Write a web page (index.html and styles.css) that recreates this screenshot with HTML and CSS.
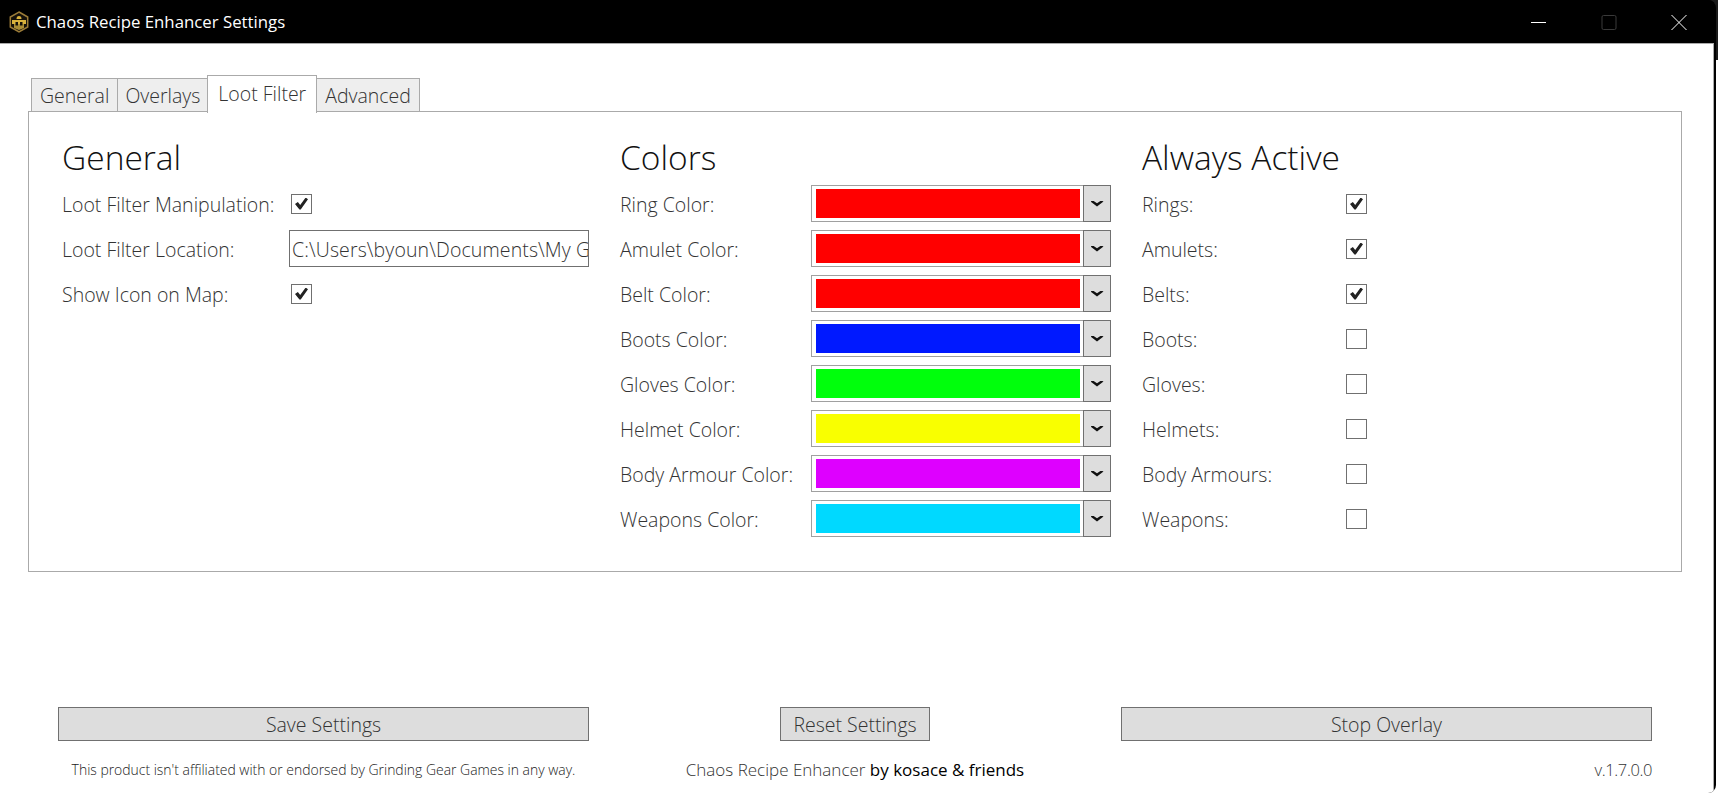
FILE: index.html
```html
<!DOCTYPE html>
<html lang="en">
<head>
    <meta charset="UTF-8">
    <meta name="viewport" content="width=device-width, initial-scale=1.0">
    <title>Chaos Recipe Enhancer Settings</title>
    <link rel="stylesheet" href="styles.css">
</head>
<body>
    <div class="window">
        <header class="titlebar">
            <svg class="logo" viewBox="0 0 20 22" width="20" height="22">
                <path d="M10 1 L18.7 6 V16 L10 21 L1.3 16 V6 Z" fill="#14100a" stroke="#9c7c38" stroke-width="1.5"/>
                <path d="M7.5 8 Q7.5 5 10 5 Q12.5 5 12.5 8 Z" fill="#d8b13c"/>
                <path d="M3 9 H17 V13 H3 Z" fill="#d8b13c"/>
                <path d="M5 13 H15 V17 L10 19 L5 17 Z" fill="#a98c34"/>
                <path d="M6.5 11 H9 V14.5 H6.5 Z M11 11 H13.5 V14.5 H11 Z" fill="#14100a"/>
            </svg>
            <span class="window-title">Chaos Recipe Enhancer Settings</span>
            <div class="window-buttons">
                <span class="win-btn"><svg width="16" height="16" viewBox="0 0 16 16"><path d="M0 7.5 H15" stroke="#fff" stroke-width="1"/></svg></span>
                <span class="win-btn"><svg width="16" height="16" viewBox="0 0 16 16"><rect x="1" y="0.5" width="14" height="14" rx="1.5" fill="none" stroke="#3a3a3a" stroke-width="1"/></svg></span>
                <span class="win-btn"><svg width="16" height="16" viewBox="0 0 16 16"><path d="M0.5 0 L15.5 15 M15.5 0 L0.5 15" stroke="#fff" stroke-width="1"/></svg></span>
            </div>
        </header>

        <main class="content">
            <nav class="tabs">
                <a class="tab">General</a>
                <a class="tab tab-overlays">Overlays</a>
                <a class="tab tab-active">Loot Filter</a>
                <a class="tab">Advanced</a>
            </nav>
            <section class="panel">
                <div class="column column-general">
                    <h2 class="heading">General</h2>
                    <div class="row">
                        <label class="label label-general">Loot Filter Manipulation:</label>
                        <span class="checkbox checked"></span>
                    </div>
                    <div class="row">
                        <label class="label label-general">Loot Filter Location:</label>
                        <div class="textbox">C:\Users\byoun\Documents\My G</div>
                    </div>
                    <div class="row">
                        <label class="label label-general">Show Icon on Map:</label>
                        <span class="checkbox checked"></span>
                    </div>
                </div>

                <div class="column column-colors">
                    <h2 class="heading">Colors</h2>
                    <div class="row"><label class="label label-colors">Ring Color:</label><div class="combo"><div class="swatch red"></div><div class="combo-btn"></div></div></div>
                    <div class="row"><label class="label label-colors">Amulet Color:</label><div class="combo"><div class="swatch red"></div><div class="combo-btn"></div></div></div>
                    <div class="row"><label class="label label-colors">Belt Color:</label><div class="combo"><div class="swatch red"></div><div class="combo-btn"></div></div></div>
                    <div class="row"><label class="label label-colors">Boots Color:</label><div class="combo"><div class="swatch blue"></div><div class="combo-btn"></div></div></div>
                    <div class="row"><label class="label label-colors">Gloves Color:</label><div class="combo"><div class="swatch green"></div><div class="combo-btn"></div></div></div>
                    <div class="row"><label class="label label-colors">Helmet Color:</label><div class="combo"><div class="swatch yellow"></div><div class="combo-btn"></div></div></div>
                    <div class="row"><label class="label label-colors">Body Armour Color:</label><div class="combo"><div class="swatch magenta"></div><div class="combo-btn"></div></div></div>
                    <div class="row"><label class="label label-colors">Weapons Color:</label><div class="combo"><div class="swatch cyan"></div><div class="combo-btn"></div></div></div>
                </div>

                <div class="column column-active">
                    <h2 class="heading">Always Active</h2>
                    <div class="row"><label class="label label-active">Rings:</label><span class="checkbox checked"></span></div>
                    <div class="row"><label class="label label-active">Amulets:</label><span class="checkbox checked"></span></div>
                    <div class="row"><label class="label label-active">Belts:</label><span class="checkbox checked"></span></div>
                    <div class="row"><label class="label label-active">Boots:</label><span class="checkbox"></span></div>
                    <div class="row"><label class="label label-active">Gloves:</label><span class="checkbox"></span></div>
                    <div class="row"><label class="label label-active">Helmets:</label><span class="checkbox"></span></div>
                    <div class="row"><label class="label label-active">Body Armours:</label><span class="checkbox"></span></div>
                    <div class="row"><label class="label label-active">Weapons:</label><span class="checkbox"></span></div>
                </div>
            </section>

            <div class="actions">
                <button class="button">Save Settings</button>
                <button class="button button-reset">Reset Settings</button>
                <button class="button">Stop Overlay</button>
                <p class="note">This product isn't affiliated with or endorsed by Grinding Gear Games in any way.</p>
                <p class="credit">Chaos Recipe Enhancer <span class="credit-by">by kosace &amp; friends</span></p>
                <p class="version">v.1.7.0.0</p>
            </div>
        </main>
    </div>
</body>
</html>
```

FILE: styles.css
```css
html, body {
    margin: 0;
    height: 100%;
    overflow: hidden;
}
body {
    background: linear-gradient(#1a1a1a 0 60px, #fff 60px);
    font-family: "Open Sans", sans-serif;
    font-weight: 300;
    color: #333;
}
.window {
    height: 793px;
    width: 1716px;
    box-sizing: border-box;
    background-color: #000;
    border-radius: 0 8px 8px 0;
    overflow: hidden;
}
.titlebar {
    height: 44px;
    box-sizing: border-box;
    background-color: #000;
    border-bottom: 1px solid #aaa;
    display: flex;
    align-items: center;
    padding-left: 9px;
    margin-right: 2px;
    color: #fff;
}
.logo {
    margin-right: 7px;
}
.window-title {
    font-size: 16.8px;
    font-weight: 400;
}
.window-buttons {
    margin-left: auto;
    display: flex;
    gap: 54px;
    padding-right: 27px;
}
.win-btn {
    display: block;
    width: 16px;
    height: 16px;
}
.content {
    box-sizing: border-box;
    height: 749px;
    margin-right: 2px;
    padding: 31px 31px 0 28px;
    background-color: #fff;
    border-right: 1px solid #aaa;
}
.tabs {
    display: flex;
    align-items: flex-end;
    padding-left: 3px;
    height: 36px;
    position: relative;
    z-index: 1;
}
.tab {
    box-sizing: border-box;
    height: 33px;
    padding: 0 8px;
    background-color: #eee;
    border: 1px solid #aaa;
    border-bottom: none;
    font-size: 19.5px;
    line-height: 33px;
    margin-right: -1px;
}
.tab-overlays {
    padding: 0 7px;
}
.tab-active {
    height: 38px;
    background-color: #fff;
    padding: 0 10px;
    line-height: 35px;
    margin-bottom: -2px;
}
.panel {
    box-sizing: border-box;
    height: 461px;
    border: 1px solid #aaa;
    display: grid;
    grid-template-columns: 558px 522px 1fr;
    padding: 28px 0 0 33px;
}
.heading {
    margin: -1px 0 10px;
    font-size: 33.5px;
    font-weight: 300;
    line-height: 36px;
    color: #111;
}
.row {
    display: flex;
    align-items: center;
    height: 37px;
    margin-bottom: 8px;
}
.label {
    display: block;
    padding-top: 2px;
    font-size: 19.5px;
    color: #333;
}
.label-general { width: 227px; }
.label-colors { width: 191px; }
.label-active { width: 204px; }
.label-general + .checkbox {
    margin-left: 2px;
}
.checkbox {
    box-sizing: border-box;
    width: 21px;
    height: 20px;
    border: 1px solid #707070;
    background-color: #fff;
    display: flex;
    align-items: center;
    justify-content: center;
}
.checked::after {
    content: "";
    width: 13px;
    height: 12px;
    background-color: #222;
    clip-path: polygon(0 55%, 22% 38%, 40% 62%, 82% 0, 100% 14%, 44% 100%, 34% 100%);
}
.textbox {
    box-sizing: border-box;
    width: 300px;
    height: 37px;
    border: 1px solid #707070;
    font-size: 19.5px;
    letter-spacing: 0.12px;
    line-height: 37px;
    padding-left: 2px;
    white-space: nowrap;
    overflow: hidden;
    color: #333;
}
.combo {
    box-sizing: border-box;
    width: 300px;
    height: 37px;
    border: 1px solid #a0a0a0;
    display: flex;
}
.swatch {
    flex: 1;
    margin: 3px 3px 3px 4px;
}
.red { background-color: #ff0000; }
.blue { background-color: #0019ff; }
.green { background-color: #00ff0c; }
.yellow { background-color: #f9ff00; }
.magenta { background-color: #de00ff; }
.cyan { background-color: #00d9ff; }
.combo-btn {
    box-sizing: border-box;
    width: 28px;
    margin: -1px -1px -1px 0;
    background-color: #ddd;
    border: 1px solid #707070;
    display: flex;
    align-items: center;
    justify-content: center;
}
.combo-btn::after {
    content: "";
    width: 13px;
    height: 6px;
    background-color: #111;
    clip-path: polygon(0 15%, 18% 0, 50% 45%, 82% 0, 100% 15%, 50% 100%);
}
.actions {
    display: grid;
    grid-template-columns: 531px 1fr 531px;
    padding: 135px 30px 0 30px;
    align-items: center;
}
.button {
    height: 34px;
    background-color: #ddd;
    border: 1px solid #707070;
    font-family: inherit;
    font-weight: 300;
    font-size: 19.5px;
    color: #333;
    padding: 0;
}
.button-reset {
    width: 150px;
    justify-self: center;
}
.note, .credit, .version {
    margin: 17px 0 0;
    text-align: center;
}
.note {
    font-size: 13.95px;
    color: #222;
}
.credit {
    font-size: 17px;
}
.credit-by {
    color: #000;
    font-weight: 400;
}
.version {
    font-size: 16.5px;
    letter-spacing: -0.4px;
    text-align: right;
}
```
